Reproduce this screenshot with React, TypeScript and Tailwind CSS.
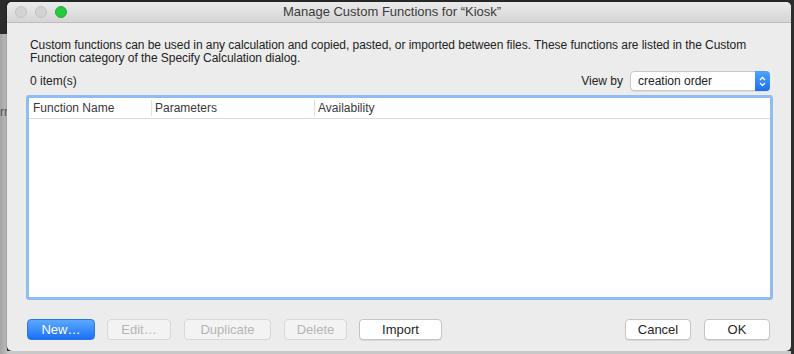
import React from 'react'

const font = { fontFamily: '"Liberation Sans", Arial, sans-serif' }

function Btn({ label, w, kind = 'normal' }: { label: string; w: string; kind?: 'normal' | 'primary' | 'disabled' }) {
  const base = `${w} h-[21px] rounded-[4px] text-[13px] flex items-center justify-center leading-none`
  if (kind === 'primary')
    return <div className={`${base} bg-gradient-to-b from-[#5aa9ff] to-[#1a6ff5] text-white border border-[#2a75e8]`}>{label}</div>
  if (kind === 'disabled')
    return <div className={`${base} bg-[#f3f3f3] text-[#b5b5b5] border border-[#d8d8d8]`}>{label}</div>
  return <div className={`${base} bg-white text-[#262626] border border-[#c4c4c4] shadow-[0_1px_0_rgba(0,0,0,0.08)]`}>{label}</div>
}

export default function App() {
  return (
    <div className="w-[794px] h-[354px] flex bg-[#2b2b2b] overflow-hidden" style={font}>
      {/* backdrop left */}
      <div className="w-[7px] flex flex-col">
        <div className="h-[34px] bg-[#2b2b2b]" />
        <div className="flex-1 bg-gradient-to-r from-[#a4a4a4] to-[#bdbdbd] text-[12px] text-[#555] pt-[72px] leading-none overflow-hidden whitespace-nowrap">rn</div>
      </div>

      <div className="flex flex-col">
        <div className="h-[2px]" />
        {/* window */}
        <div className="w-[784px] h-[349px] rounded-[5px] bg-[#ececec] flex flex-col overflow-hidden shadow-[0_0_2px_rgba(0,0,0,0.5)]">
          {/* title bar */}
          <div className="h-[21px] shrink-0 bg-gradient-to-b from-[#ebebeb] to-[#d5d5d5] border-b border-[#bdbdbd] flex items-center">
            <div className="flex gap-[8px] pl-[8px]">
              <span className="w-[12px] h-[12px] rounded-full bg-[#d3d3d3] border border-[#c2c2c2]" />
              <span className="w-[12px] h-[12px] rounded-full bg-[#d3d3d3] border border-[#c2c2c2]" />
              <span className="w-[12px] h-[12px] rounded-full bg-[#27c93f] border border-[#1eae33]" />
            </div>
            <div className="flex-1 text-center text-[13px] text-[#3b3b3b] pr-[74px]">Manage Custom Functions for “Kiosk”</div>
          </div>

          {/* body */}
          <div className="flex-1 flex flex-col pl-[19px] pr-[18px]">
            <p className="text-[12px] leading-[13px] text-[#222] pt-[16px] pl-[4px] whitespace-nowrap tracking-[-0.05px]">
              Custom functions can be used in any calculation and copied, pasted, or imported between files. These functions are listed in the Custom
              <br />
              Function category of the Specify Calculation dialog.
            </p>

            <div className="flex items-center mt-[6px] pl-[4px] pr-[3px]">
              <span className="text-[12px] text-[#222] flex-1">0 item(s)</span>
              <span className="text-[12px] text-[#222] mr-[7px]">View by</span>
              <div className="w-[140px] h-[20px] bg-white border border-[#c8c8c8] rounded-[4px] flex items-center shadow-[0_1px_0_rgba(0,0,0,0.06)]">
                <span className="flex-1 text-[12px] text-[#222] pl-[7px]">creation order</span>
                <div className="w-[15px] h-[20px] -mr-px rounded-r-[4px] bg-gradient-to-b from-[#4fa3ff] to-[#1b6ff0] flex items-center justify-center">
                  <svg width="7" height="11" viewBox="0 0 7 11" fill="none" stroke="white" strokeWidth="1.3">
                    <path d="M1 4 L3.5 1.5 L6 4" />
                    <path d="M1 7 L3.5 9.5 L6 7" />
                  </svg>
                </div>
              </div>
            </div>

            {/* table */}
            <div className="mt-[4px] h-[205px] border-[3px] border-[#8fbcf2] rounded-[3px] bg-white flex flex-col">
              <div className="h-[21px] border-b border-[#dcdcdc] flex items-center text-[12px] text-[#3a3a3a]">
                <div className="w-[123px] pl-[4px] border-r border-[#e2e2e2] h-[16px] flex items-center">Function Name</div>
                <div className="w-[163px] pl-[3px] border-r border-[#e2e2e2] h-[16px] flex items-center">Parameters</div>
                <div className="flex-1 pl-[3px] h-[16px] flex items-center">Availability</div>
              </div>
            </div>

            {/* buttons */}
            <div className="flex items-center mt-[19px] pl-[1px]">
              <Btn label="New…" w="w-[68px]" kind="primary" />
              <div className="w-[12px]" />
              <Btn label="Edit…" w="w-[64px]" kind="disabled" />
              <div className="w-[13px]" />
              <Btn label="Duplicate" w="w-[87px]" kind="disabled" />
              <div className="w-[13px]" />
              <Btn label="Delete" w="w-[63px]" kind="disabled" />
              <div className="w-[12px]" />
              <Btn label="Import" w="w-[83px]" />
              <div className="flex-1" />
              <Btn label="Cancel" w="w-[66px]" />
              <div className="w-[13px]" />
              <Btn label="OK" w="w-[66px]" />
              <div className="w-[3px]" />
            </div>
          </div>
        </div>
        <div className="flex-1 bg-[#c8c8c8]" />
      </div>

      <div className="flex-1 bg-[#2e2e2e]" />
    </div>
  )
}
